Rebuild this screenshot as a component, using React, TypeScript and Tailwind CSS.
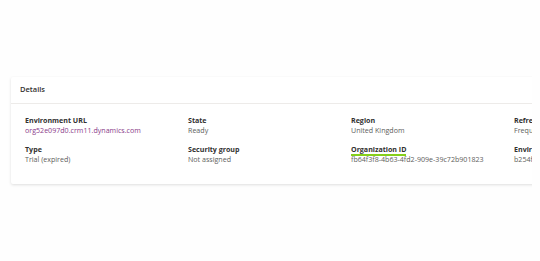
const fields = [
  [
    { label: 'Environment URL', value: 'org52e097d0.crm11.dynamics.com', link: true },
    { label: 'Type', value: 'Trial (expired)' },
  ],
  [
    { label: 'State', value: 'Ready' },
    { label: 'Security group', value: 'Not assigned' },
  ],
  [
    { label: 'Region', value: 'United Kingdom' },
    { label: 'Organization ID', value: 'fb64f3f8-4b63-4fd2-909e-39c72b901823', mark: true },
  ],
  [
    { label: 'Refresh cadence', value: 'Frequent' },
    { label: 'Environment ID', value: 'b254f9e2-1c7a-4d3b-8e61-0a9f3c5d7e21' },
  ],
]

export default function App() {
  return (
    <div
      className="w-[540px] h-[261px] bg-[#fefefe] pt-[76px] pl-[8px]"
      style={{ fontFamily: '"Open Sans", "Noto Sans", Arial, sans-serif' }}
    >
      {/* card is cut off at the right edge, like the reference */}
      <div className="w-[524px] overflow-hidden pl-[3px] pt-[1px] pb-[5px]">
        <div className="w-[720px] bg-white rounded-[2px] shadow-[0_1px_3px_rgba(0,0,0,0.13)]">
          <div className="h-[27px] flex items-center pl-[9px] border-b border-[#edebe9] text-[7.5px] font-semibold text-[#323130]">
            Details
          </div>
          <div className="flex pl-[14px] pt-[11px] pb-[20px]">
            {fields.map((col, i) => (
              <div key={i} className="w-[163px] shrink-0 flex flex-col gap-[9px]">
                {col.map((f) => (
                  <div key={f.label} className="flex flex-col text-[7.1px] leading-[10px] whitespace-nowrap">
                    <span className="font-bold text-[#323130]">
                      <span className={f.mark ? 'border-b-2 border-[#86cf1a]' : ''}>
                        {f.label}
                      </span>
                    </span>
                    <span className={f.link ? 'text-[#8a3a8a]' : 'text-[#605e5c]'}>
                      {f.value}
                    </span>
                  </div>
                ))}
              </div>
            ))}
          </div>
        </div>
      </div>
    </div>
  )
}
